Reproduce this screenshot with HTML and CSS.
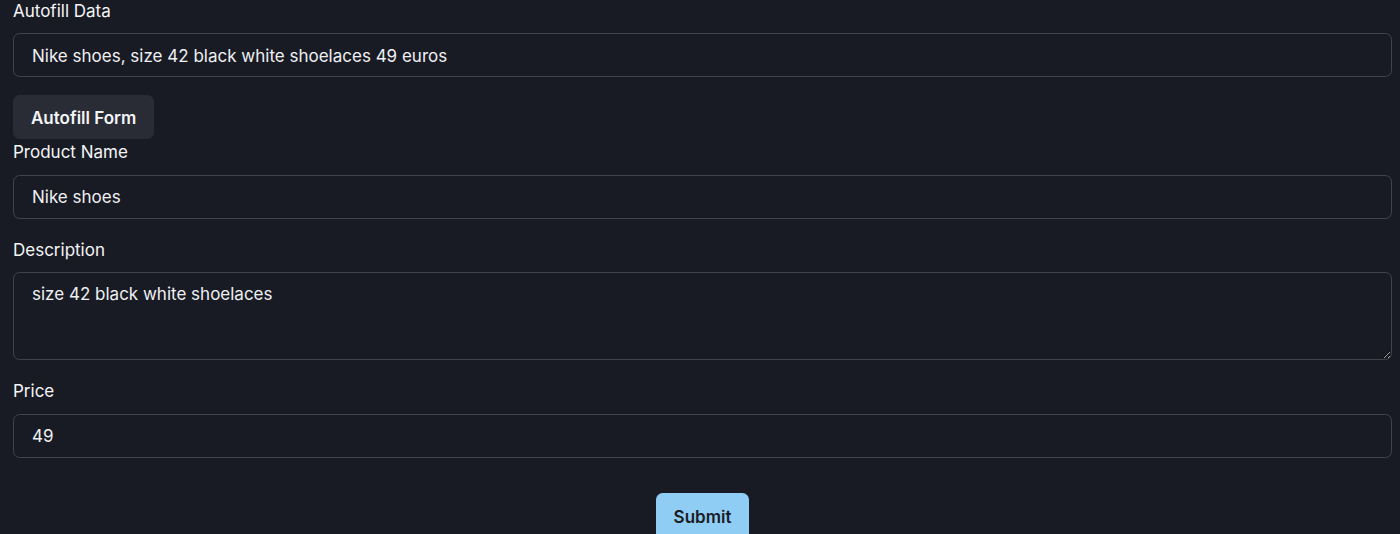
FILE: index.html
```html
<!DOCTYPE html>
<html lang="en">
<head>
<meta charset="utf-8">
<title>Autofill Form</title>
<link rel="stylesheet" href="styles.css">
</head>
<body>
<main class="page">
  <div class="field">
    <label class="label" for="autofill">Autofill Data</label>
    <input class="input" id="autofill" type="text" value="Nike shoes, size 42 black white shoelaces 49 euros">
  </div>
  <button class="btn btn-gray" type="button">Autofill Form</button>
  <form class="form">
    <div class="field">
      <label class="label" for="name">Product Name</label>
      <input class="input" id="name" type="text" value="Nike shoes">
    </div>
    <div class="field">
      <label class="label" for="desc">Description</label>
      <textarea class="input textarea" id="desc">size 42 black white shoelaces</textarea>
    </div>
    <div class="field">
      <label class="label" for="price">Price</label>
      <input class="input" id="price" type="text" value="49">
    </div>
    <div class="actions">
      <button class="btn btn-blue" type="button">Submit</button>
    </div>
  </form>
</main>
</body>
</html>
```

FILE: styles.css
```css
html, body {
  margin: 0;
  padding: 0;
  background: #191b24;
}
body {
  font-family: Inter, "Open Sans", "Liberation Sans", sans-serif;
  color: #f2f3f5;
  font-size: 17px;
}
.page {
  width: 1379px;
  margin-left: 13px;
  margin-top: -2px;
  display: flex;
  flex-direction: column;
}
.field {
  display: flex;
  flex-direction: column;
}
.label {
  font-size: 17px;
  font-weight: 400;
  line-height: 26.4px;
  margin-bottom: 9px;
  color: #f4f5f7;
}
.input {
  box-sizing: border-box;
  width: 100%;
  height: 44px;
  padding: 1px 18px 0;
  border: 1px solid #41444e;
  border-radius: 6.6px;
  background: transparent;
  color: #eef0f3;
  font-family: inherit;
  font-size: 17px;
  outline: none;
  margin: 0;
}
.textarea {
  height: 88px;
  padding-top: 10px;
  padding-bottom: 8.8px;
  line-height: 1.375;
  resize: vertical;
  display: block;
}
.btn {
  box-sizing: border-box;
  height: 44px;
  padding: 2px 18px 0;
  border: none;
  border-radius: 6.6px;
  font-family: inherit;
  font-size: 17px;
  font-weight: 600;
  cursor: pointer;
}
.btn-gray {
  align-self: flex-start;
  margin-top: 18px;
  background: #2a2c35;
  color: #f4f5f7;
}
.form {
  display: flex;
  flex-direction: column;
  gap: 18px;
}
.actions {
  display: flex;
  justify-content: center;
  margin-top: 17px;
}
.btn-blue {
  height: 48px;
  padding-top: 1px;
  background: #90cdf4;
  color: #1a1c24;
}
```
